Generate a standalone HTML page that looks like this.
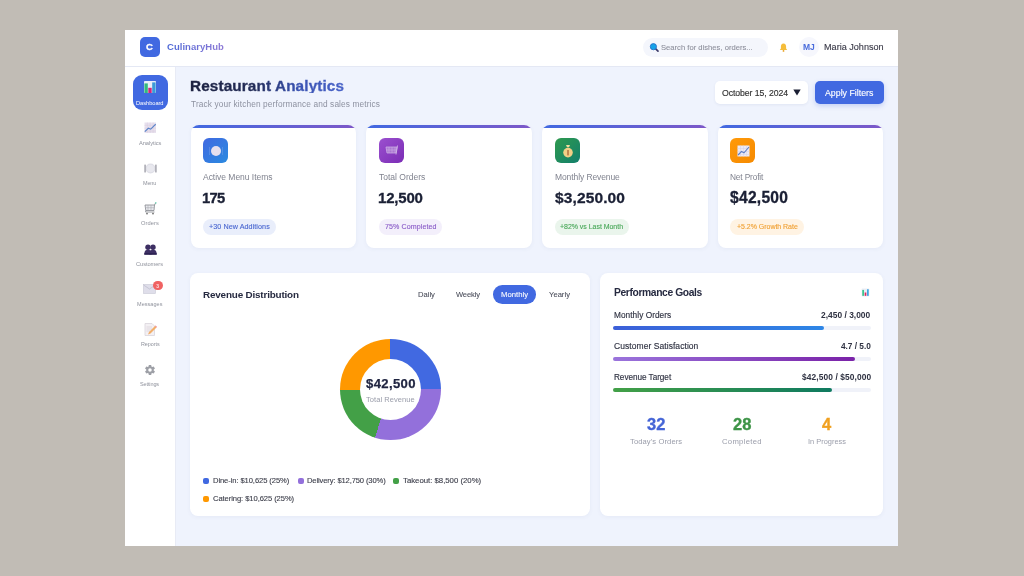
<!DOCTYPE html>
<html><head><meta charset="utf-8">
<style>
*{margin:0;padding:0;box-sizing:border-box}
html,body{width:1024px;height:576px;overflow:hidden;background:#c1bcb5;font-family:"Liberation Sans",sans-serif}
.a{position:absolute}
.t{position:absolute;white-space:pre;font-family:"Liberation Sans",sans-serif;will-change:transform}
.card{position:absolute;background:#fff;border-radius:8px;box-shadow:0 1px 4px rgba(60,80,140,.06);overflow:hidden}
.bar{position:absolute;left:0;top:0;right:0;height:3px;background:linear-gradient(90deg,#4169e1,#7d58c8)}
.ib{position:absolute;width:25px;height:25px;border-radius:6px}
.badge{position:absolute;height:16px;border-radius:8px}
.track{position:absolute;left:613px;width:257.6px;height:4px;border-radius:2px;background:#f0f2f9}
.fill{position:absolute;left:0;top:0;height:4px;border-radius:2px}
.dot{position:absolute;width:6px;height:6px;border-radius:2px}
</style></head><body>
<div style="position:absolute;left:0;top:0;width:1024px;height:576px;background:#c1bcb5;filter:blur(0.35px)">
<!-- app frame -->
<div class="a" style="left:125px;top:30px;width:773px;height:516px;background:#eff3fd"></div>
<!-- header -->
<div class="a" style="left:125px;top:30px;width:773px;height:36.5px;background:#fff;border-bottom:1px solid #e4e8f4"></div>
<div class="a" style="left:140px;top:37px;width:20px;height:20px;border-radius:5px;background:#4169e1"></div>
<div class="a" style="left:643px;top:37.5px;width:125px;height:19.5px;border-radius:10px;background:#f4f6fc"></div>
<!-- search icon -->
<svg class="a" style="left:649.3px;top:41.7px" width="11" height="11" viewBox="0 0 11 11">
 <line x1="6.2" y1="6.4" x2="9" y2="9.2" stroke="#3e3d6a" stroke-width="1.7" stroke-linecap="round"/>
 <circle cx="4.4" cy="4.7" r="3.1" fill="#15a3e8" stroke="#2a70c8" stroke-width="0.9"/>
</svg>
<!-- bell -->
<svg class="a" style="left:779px;top:43px" width="9" height="9" viewBox="0 0 9 9">
 <path d="M4.5 0.6 C2.6 0.6 1.9 2.2 1.9 3.8 L1.9 5.6 L0.8 7.1 L8.2 7.1 L7.1 5.6 L7.1 3.8 C7.1 2.2 6.4 0.6 4.5 0.6Z" fill="#f5bd3a"/>
 <circle cx="4.5" cy="7.9" r="0.9" fill="#e8a020"/>
</svg>
<div class="a" style="left:799px;top:37px;width:20px;height:20px;border-radius:50%;background:#f6f7fd"></div>
<!-- sidebar -->
<div class="a" style="left:125px;top:66.5px;width:51px;height:479.5px;background:#fff;border-right:1px solid #e8ebf5"></div>
<div class="a" style="left:132.5px;top:75px;width:35.5px;height:35px;border-radius:9px;background:#4169e1"></div>
<!-- sidebar icons -->
<svg class="a" style="left:144px;top:81px" width="12" height="12" viewBox="0 0 12 12">
 <rect x="0" y="0" width="12" height="12" rx="0.8" fill="#e9edf7"/>
 <rect x="0.4" y="2.4" width="3.4" height="9.6" fill="#34b87e"/>
 <rect x="4.3" y="6.8" width="3.4" height="5.2" fill="#d6247a"/>
 <rect x="8.2" y="1.4" width="3.4" height="10.6" fill="#3a9ad8"/>
</svg>
<svg class="a" style="left:143.8px;top:121.5px" width="12.5" height="11.5" viewBox="0 0 13 12" opacity="0.85">
 <rect x="0.5" y="0.5" width="12" height="11" fill="#e4dcec"/>
 <path d="M0.5 3.5H12.5M0.5 6.5H12.5M0.5 9.5H12.5M3.5 0.5V11.5M6.5 0.5V11.5M9.5 0.5V11.5" stroke="#d2c4d8" stroke-width="0.5"/>
 <path d="M0.8 10 L4.5 6.5 L7 7.5 L12.2 2.2" stroke="#3f6fc0" stroke-width="1.2" fill="none"/>
</svg>
<svg class="a" style="left:143.5px;top:162.8px" width="13" height="11" viewBox="0 0 13 11" opacity="0.85">
 <circle cx="6.5" cy="5.5" r="5" fill="#d9d9e2"/>
 <circle cx="6.5" cy="5.5" r="3.8" fill="#e4e4ec"/>
 <rect x="0.3" y="1.5" width="1.6" height="8" rx="0.6" fill="#9c9ca6"/>
 <rect x="11.1" y="1.5" width="1.6" height="8" rx="0.6" fill="#9c9ca6"/>
</svg>
<svg class="a" style="left:143.5px;top:201.5px" width="13" height="13" viewBox="0 0 13 13" opacity="0.85">
 <path d="M1 3 H10.5 L10 8.5 H1.8Z" fill="#e6e7ec" stroke="#6f717a" stroke-width="0.8"/>
 <path d="M4 3V8.5M7 3V8.5M1.3 5.7H10.3" stroke="#9c9ea6" stroke-width="0.6"/>
 <path d="M10.5 3 L11.6 1" stroke="#6f717a" stroke-width="0.9"/>
 <path d="M1.8 8.5 L1.6 10 H10.5" stroke="#6f717a" stroke-width="0.8" fill="none"/>
 <circle cx="3" cy="11.6" r="0.9" fill="#555"/><circle cx="9" cy="11.6" r="0.9" fill="#555"/>
 <circle cx="11.8" cy="0.9" r="0.8" fill="#5ac8a8"/>
</svg>
<svg class="a" style="left:143.5px;top:244px" width="13" height="11" viewBox="0 0 13 11">
 <circle cx="4" cy="3.2" r="2.7" fill="#3d2f63"/><circle cx="9" cy="3.2" r="2.7" fill="#3d2f63"/>
 <path d="M0.3 10.5 C0.3 6.5 2 5.8 4 5.8 C6 5.8 7.7 6.5 7.7 10.5Z" fill="#3d2f63"/>
 <path d="M5.3 10.5 C5.3 6.5 7 5.8 9 5.8 C11 5.8 12.7 6.5 12.7 10.5Z" fill="#3d2f63"/>
 <rect x="0.3" y="9.2" width="12.4" height="1.5" fill="#2a2050"/>
</svg>
<svg class="a" style="left:143.3px;top:284px" width="13" height="10" viewBox="0 0 13 10" opacity="0.9">
 <rect x="0.4" y="0.4" width="12.2" height="9.2" fill="#dcdbe8" stroke="#c4c3d2" stroke-width="0.6"/>
 <path d="M0.6 1 L6.5 5 L12.4 1" stroke="#b5b4c6" stroke-width="0.7" fill="none"/>
</svg>
<div class="a" style="left:153.4px;top:281px;width:9.3px;height:9.3px;border-radius:50%;background:#f06262"></div>
<div class="t" style="left:153.4px;top:282.5px;width:9.3px;text-align:center;font-size:5px;line-height:6px;color:rgba(255,255,255,.8);font-weight:700">3</div>
<svg class="a" style="left:144px;top:323px" width="13" height="13" viewBox="0 0 13 13" opacity="0.85">
 <path d="M1 0.5 H8 L10.5 3 V12.5 H1Z" fill="#f2eef2" stroke="#d0c8d2" stroke-width="0.7"/>
 <path d="M2.5 4H8M2.5 6H8M2.5 8H6" stroke="#c9bfcb" stroke-width="0.6"/>
 <path d="M4 11.5 L5 9 L11 3 L12.5 4.5 L6.5 10.5Z" fill="#f0a050"/>
 <path d="M11 3 L12.5 4.5 L13 4 L11.5 2.5Z" fill="#e8506a"/>
</svg>
<svg class="a" style="left:144px;top:363.5px" width="12" height="12" viewBox="0 0 24 24" opacity="0.85">
 <path fill="#8d8f97" d="M12 15.5A3.5 3.5 0 1 1 12 8.5a3.5 3.5 0 0 1 0 7zm7.43-2.53c.04-.32.07-.64.07-.97s-.03-.66-.07-1l2.11-1.63c.19-.15.24-.42.12-.64l-2-3.46c-.12-.22-.39-.31-.61-.22l-2.49 1c-.52-.39-1.06-.73-1.69-.98l-.37-2.65A.506.506 0 0 0 14 2h-4c-.25 0-.46.18-.5.42l-.37 2.65c-.63.25-1.17.59-1.69.98l-2.49-1c-.22-.09-.49 0-.61.22l-2 3.46c-.13.22-.07.49.12.64L4.57 11c-.04.34-.07.67-.07 1s.03.65.07.97l-2.11 1.66c-.19.15-.25.42-.12.64l2 3.46c.12.22.39.3.61.22l2.49-1.01c.52.4 1.06.74 1.69.99l.37 2.65c.04.24.25.42.5.42h4c.25 0 .46-.18.5-.42l.37-2.65c.63-.26 1.17-.59 1.69-.99l2.49 1.01c.22.08.49 0 .61-.22l2-3.46c.12-.22.07-.49-.12-.64l-2.11-1.66z"/>
</svg>
<!-- date & button -->
<div class="a" style="left:714.5px;top:81px;width:93px;height:22.5px;border-radius:5px;background:#fff;box-shadow:0 1px 3px rgba(40,60,120,.07)"></div>
<svg class="a" style="left:792.5px;top:89.3px" width="8" height="7" viewBox="0 0 8 7"><path d="M0.3 0.5 H7.7 L4 6.6Z" fill="#1b1f33"/></svg>
<div class="a" style="left:815px;top:81px;width:69px;height:22.5px;border-radius:5px;background:#4169e1;box-shadow:0 2px 5px rgba(65,105,225,.25)"></div>
<!-- stat cards -->
<div class="card" style="left:190.5px;top:125px;width:165.5px;height:123px"><div class="bar"></div></div>
<div class="card" style="left:366.3px;top:125px;width:165.5px;height:123px"><div class="bar"></div></div>
<div class="card" style="left:542.1px;top:125px;width:165.5px;height:123px"><div class="bar"></div></div>
<div class="card" style="left:717.8px;top:125px;width:165.5px;height:123px"><div class="bar"></div></div>
<div class="ib" style="left:203px;top:138px;background:linear-gradient(135deg,#4169e1,#2a8ae0)"></div>
<div class="a" style="left:210.5px;top:145.8px;width:10px;height:10px;border-radius:50%;background:#e6dfee"></div>
<div class="a" style="left:208.6px;top:146.5px;width:1px;height:8px;background:rgba(220,220,240,.18)"></div>
<div class="a" style="left:221.6px;top:146.5px;width:1px;height:8px;background:rgba(220,220,240,.18)"></div>
<div class="ib" style="left:378.8px;top:138px;background:linear-gradient(135deg,#9b50cf,#7b2cb5)"></div>
<svg class="a" style="left:384.5px;top:145px" width="14" height="11" viewBox="0 0 14 11" opacity="0.75">
 <path d="M1 2 H12 L11 8 H2Z" fill="#b58ad8" stroke="#e0d0f0" stroke-width="0.8"/>
 <path d="M4 2V8M7 2V8M10 2V8M1.5 5H11.5" stroke="#e0d0f0" stroke-width="0.6"/>
 <path d="M12.5 0.5 L11 9.5" stroke="#e8def2" stroke-width="0.9"/>
</svg>
<div class="ib" style="left:554.7px;top:138px;background:linear-gradient(135deg,#2f9a4e,#137f6c)"></div>
<svg class="a" style="left:561.5px;top:143.5px" width="12" height="14" viewBox="0 0 12 14">
 <path d="M4 1 L8 1 L7 3.2 L5 3.2Z" fill="#f3dc9a"/>
 <circle cx="6" cy="8.6" r="4.8" fill="#f2cf86"/>
 <rect x="5.3" y="6" width="1.4" height="5.4" fill="#b06a3a"/>
</svg>
<div class="ib" style="left:730.4px;top:138px;background:linear-gradient(135deg,#ff9a0a,#f68a00)"></div>
<svg class="a" style="left:736.5px;top:144.5px" width="13" height="12" viewBox="0 0 13 12">
 <rect x="0.5" y="0.5" width="12" height="11" fill="#eceaf5"/>
 <path d="M0.5 3.5H12.5M0.5 6.5H12.5M0.5 9.5H12.5M3.5 0.5V11.5M6.5 0.5V11.5M9.5 0.5V11.5" stroke="#d6d2e6" stroke-width="0.5"/>
 <path d="M1 10 L4.5 6.5 L7 7.8 L12 2" stroke="#5d7fc8" stroke-width="1.1" fill="none"/>
</svg>
<div class="badge" style="left:203.1px;top:219px;width:73px;background:#e9eefb"></div>
<div class="badge" style="left:378.9px;top:219px;width:62.8px;background:#f3effb"></div>
<div class="badge" style="left:554.7px;top:219px;width:74.4px;background:#eaf5ec"></div>
<div class="badge" style="left:730.4px;top:219px;width:73.3px;background:#fff3e3"></div>
<!-- revenue card -->
<div class="card" style="left:190.3px;top:272.6px;width:399.8px;height:243px"></div>
<div class="a" style="left:492.9px;top:285.3px;width:43.1px;height:18.5px;border-radius:9.25px;background:#4169e1"></div>
<div class="a" style="left:339.8px;top:339.2px;width:100.8px;height:100.8px;border-radius:50%;background:conic-gradient(#4169e1 0 25%,#9370db 25% 55%,#43a047 55% 75%,#ff9800 75% 100%)"></div>
<div class="a" style="left:359.7px;top:359.1px;width:61px;height:61px;border-radius:50%;background:#fff"></div>
<div class="dot" style="left:202.9px;top:477.6px;background:#4169e1"></div>
<div class="dot" style="left:297.5px;top:477.6px;background:#9370db"></div>
<div class="dot" style="left:393.4px;top:477.6px;background:#43a047"></div>
<div class="dot" style="left:202.9px;top:496px;background:#ff9800"></div>
<!-- performance card -->
<div class="card" style="left:600.3px;top:272.6px;width:282.7px;height:243px"></div>
<svg class="a" style="left:861px;top:288px" width="9" height="9" viewBox="0 0 14 14">
 <rect x="1" y="0.8" width="12" height="12.4" rx="1" fill="#e9edf5"/>
 <rect x="2" y="3" width="2.6" height="9.2" fill="#35c28a"/>
 <rect x="5.7" y="7" width="2.6" height="5.2" fill="#e0245e"/>
 <rect x="9.4" y="2" width="2.6" height="10.2" fill="#3aa0e0"/>
</svg>
<div class="track" style="top:326px"><div class="fill" style="width:211.2px;background:linear-gradient(90deg,#3c5fd8,#2d86e6)"></div></div>
<div class="track" style="top:356.8px"><div class="fill" style="width:242.4px;background:linear-gradient(90deg,#9a74dc,#7a22a8)"></div></div>
<div class="track" style="top:387.5px"><div class="fill" style="width:219.1px;background:linear-gradient(90deg,#43a047,#0f7a60)"></div></div>
<div class="t" style="left:146.30px;top:42px;font-size:9.5px;line-height:9.5px;font-weight:700;color:#fff;letter-spacing:0.000px;-webkit-text-stroke:0.3px #fff;">C</div>
<div class="t" style="left:166.50px;top:42px;font-size:9.5px;line-height:9.5px;font-weight:700;color:#4f6bd8;letter-spacing:0.040px;background:linear-gradient(90deg,#4a66d6,#8e7ad6);-webkit-background-clip:text;background-clip:text;color:transparent;">CulinaryHub</div>
<div class="t" style="left:660.50px;top:44px;font-size:7.6px;line-height:7.6px;font-weight:400;color:#8c8e9a;letter-spacing:0.019px;-webkit-text-stroke:0.08px #8c8e9a;">Search for dishes, orders...</div>
<div class="t" style="left:803.00px;top:43px;font-size:8.5px;line-height:8.5px;font-weight:700;color:#4a6cdc;letter-spacing:0.000px;">MJ</div>
<div class="t" style="left:824.00px;top:43px;font-size:9.1px;line-height:9.1px;font-weight:400;color:#3a3a48;letter-spacing:0.000px;-webkit-text-stroke:0.12px #3a3a48;">Maria Johnson</div>
<div class="t" style="left:136.15px;top:101px;font-size:5.7px;line-height:5.7px;font-weight:400;color:#fff;letter-spacing:-0.038px;">Dashboard</div>
<div class="t" style="left:138.75px;top:141px;font-size:5.7px;line-height:5.7px;font-weight:400;color:#8f929c;letter-spacing:-0.062px;">Analytics</div>
<div class="t" style="left:143.25px;top:181px;font-size:5.5px;line-height:5.5px;font-weight:400;color:#8f929c;letter-spacing:-0.167px;">Menu</div>
<div class="t" style="left:141.30px;top:221px;font-size:5.7px;line-height:5.7px;font-weight:400;color:#8f929c;letter-spacing:0.080px;">Orders</div>
<div class="t" style="left:136.25px;top:262px;font-size:5.7px;line-height:5.7px;font-weight:400;color:#8f929c;letter-spacing:-0.062px;">Customers</div>
<div class="t" style="left:137.30px;top:302px;font-size:5.5px;line-height:5.5px;font-weight:400;color:#8f929c;letter-spacing:0.057px;">Messages</div>
<div class="t" style="left:140.60px;top:342px;font-size:5.4px;line-height:5.4px;font-weight:400;color:#8f929c;letter-spacing:-0.033px;">Reports</div>
<div class="t" style="left:140.40px;top:382px;font-size:5.5px;line-height:5.5px;font-weight:400;color:#8f929c;letter-spacing:-0.114px;">Settings</div>
<div class="t" style="left:189.60px;top:78px;font-size:15.3px;line-height:15.3px;font-weight:700;color:#1f2544;letter-spacing:0.126px;background:linear-gradient(90deg,#1c2140 0%,#232c58 42%,#3a53b2 70%,#4862c8 100%);-webkit-background-clip:text;background-clip:text;color:transparent;-webkit-text-stroke:0.35px transparent;">Restaurant Analytics</div>
<div class="t" style="left:190.60px;top:100px;font-size:8.3px;line-height:8.3px;font-weight:400;color:#8d91a0;letter-spacing:0.123px;">Track your kitchen performance and sales metrics</div>
<div class="t" style="left:722.00px;top:89px;font-size:8.7px;line-height:8.7px;font-weight:400;color:#333;letter-spacing:-0.067px;-webkit-text-stroke:0.15px #333;">October 15, 2024</div>
<div class="t" style="left:825.00px;top:89px;font-size:8.8px;line-height:8.8px;font-weight:400;color:#fff;letter-spacing:0.000px;-webkit-text-stroke:0.12px #fff;">Apply Filters</div>
<div class="t" style="left:203.10px;top:173px;font-size:8.5px;line-height:8.5px;font-weight:400;color:#80838f;letter-spacing:-0.025px;">Active Menu Items</div>
<div class="t" style="left:202.10px;top:191px;font-size:14.8px;line-height:14.8px;font-weight:700;color:#1b2035;letter-spacing:-0.700px;-webkit-text-stroke:0.3px #1b2035;">175</div>
<div class="t" style="left:209.10px;top:223px;font-size:7.2px;line-height:7.2px;font-weight:400;color:#4a67d0;letter-spacing:0.062px;-webkit-text-stroke:0.12px #4a67d0;">+30 New Additions</div>
<div class="t" style="left:378.90px;top:173px;font-size:8.5px;line-height:8.5px;font-weight:400;color:#80838f;letter-spacing:0.000px;">Total Orders</div>
<div class="t" style="left:377.90px;top:190px;font-size:15.0px;line-height:15.0px;font-weight:700;color:#1b2035;letter-spacing:-0.200px;-webkit-text-stroke:0.3px #1b2035;">12,500</div>
<div class="t" style="left:384.80px;top:224px;font-size:7.1px;line-height:7.1px;font-weight:400;color:#8a5cc8;letter-spacing:0.083px;-webkit-text-stroke:0.12px #8a5cc8;">75% Completed</div>
<div class="t" style="left:554.70px;top:173px;font-size:8.5px;line-height:8.5px;font-weight:400;color:#80838f;letter-spacing:-0.093px;">Monthly Revenue</div>
<div class="t" style="left:554.70px;top:190px;font-size:15.5px;line-height:15.5px;font-weight:700;color:#1b2035;letter-spacing:0.125px;-webkit-text-stroke:0.3px #1b2035;">$3,250.00</div>
<div class="t" style="left:560.20px;top:223px;font-size:7.0px;line-height:7.0px;font-weight:400;color:#4aa85a;letter-spacing:-0.035px;-webkit-text-stroke:0.12px #4aa85a;">+82% vs Last Month</div>
<div class="t" style="left:730.40px;top:173px;font-size:8.3px;line-height:8.3px;font-weight:400;color:#80838f;letter-spacing:-0.133px;">Net Profit</div>
<div class="t" style="left:730.40px;top:190px;font-size:15.6px;line-height:15.6px;font-weight:700;color:#1b2035;letter-spacing:0.267px;-webkit-text-stroke:0.3px #1b2035;">$42,500</div>
<div class="t" style="left:736.80px;top:223px;font-size:7.0px;line-height:7.0px;font-weight:400;color:#f0a033;letter-spacing:-0.031px;-webkit-text-stroke:0.12px #f0a033;">+5.2% Growth Rate</div>
<div class="t" style="left:202.70px;top:290px;font-size:9.9px;line-height:9.9px;font-weight:700;color:#262a40;letter-spacing:-0.174px;">Revenue Distribution</div>
<div class="t" style="left:418.20px;top:291px;font-size:7.6px;line-height:7.6px;font-weight:400;color:#4a4d5a;letter-spacing:0.000px;-webkit-text-stroke:0.08px #4a4d5a;">Daily</div>
<div class="t" style="left:456.00px;top:291px;font-size:7.6px;line-height:7.6px;font-weight:400;color:#4a4d5a;letter-spacing:-0.160px;-webkit-text-stroke:0.08px #4a4d5a;">Weekly</div>
<div class="t" style="left:500.80px;top:291px;font-size:7.7px;line-height:7.7px;font-weight:400;color:#fff;letter-spacing:0.033px;-webkit-text-stroke:0.08px #fff;">Monthly</div>
<div class="t" style="left:548.80px;top:291px;font-size:7.6px;line-height:7.6px;font-weight:400;color:#4a4d5a;letter-spacing:0.020px;-webkit-text-stroke:0.08px #4a4d5a;">Yearly</div>
<div class="t" style="left:365.60px;top:377px;font-size:13.1px;line-height:13.1px;font-weight:700;color:#1f2440;letter-spacing:0.367px;-webkit-text-stroke:0.25px #1f2440;">$42,500</div>
<div class="t" style="left:365.80px;top:396px;font-size:7.5px;line-height:7.5px;font-weight:400;color:#9a9daa;letter-spacing:0.067px;">Total Revenue</div>
<div class="t" style="left:213.20px;top:477px;font-size:7.6px;line-height:7.6px;font-weight:400;color:#3c3e4a;letter-spacing:-0.090px;-webkit-text-stroke:0.12px #3c3e4a;">Dine-in: $10,625 (25%)</div>
<div class="t" style="left:307.20px;top:477px;font-size:7.6px;line-height:7.6px;font-weight:400;color:#3c3e4a;letter-spacing:-0.127px;-webkit-text-stroke:0.12px #3c3e4a;">Delivery: $12,750 (30%)</div>
<div class="t" style="left:403.00px;top:477px;font-size:7.8px;line-height:7.8px;font-weight:400;color:#3c3e4a;letter-spacing:-0.015px;-webkit-text-stroke:0.12px #3c3e4a;">Takeout: $8,500 (20%)</div>
<div class="t" style="left:213.20px;top:495px;font-size:7.6px;line-height:7.6px;font-weight:400;color:#3c3e4a;letter-spacing:-0.073px;-webkit-text-stroke:0.12px #3c3e4a;">Catering: $10,625 (25%)</div>
<div class="t" style="left:613.50px;top:288px;font-size:10.3px;line-height:10.3px;font-weight:700;color:#262a40;letter-spacing:-0.381px;">Performance Goals</div>
<div class="t" style="left:613.50px;top:311px;font-size:8.3px;line-height:8.3px;font-weight:400;color:#2f3242;letter-spacing:0.038px;-webkit-text-stroke:0.15px #2f3242;">Monthly Orders</div>
<div class="t" style="left:821.30px;top:311px;font-size:8.4px;line-height:8.4px;font-weight:700;color:#2f3242;letter-spacing:0.025px;">2,450 / 3,000</div>
<div class="t" style="left:613.50px;top:342px;font-size:8.5px;line-height:8.5px;font-weight:400;color:#2f3242;letter-spacing:0.060px;-webkit-text-stroke:0.15px #2f3242;">Customer Satisfaction</div>
<div class="t" style="left:840.80px;top:342px;font-size:8.3px;line-height:8.3px;font-weight:700;color:#2f3242;letter-spacing:-0.025px;">4.7 / 5.0</div>
<div class="t" style="left:613.50px;top:374px;font-size:8.2px;line-height:8.2px;font-weight:400;color:#2f3242;letter-spacing:-0.038px;-webkit-text-stroke:0.15px #2f3242;">Revenue Target</div>
<div class="t" style="left:801.90px;top:373px;font-size:8.4px;line-height:8.4px;font-weight:700;color:#2f3242;letter-spacing:0.106px;">$42,500 / $50,000</div>
<div class="t" style="left:647.30px;top:416px;font-size:16.5px;line-height:16.5px;font-weight:700;color:#4464d6;letter-spacing:0.000px;-webkit-text-stroke:0.35px #4464d6;">32</div>
<div class="t" style="left:630.15px;top:438px;font-size:7.6px;line-height:7.6px;font-weight:400;color:#9a9daa;letter-spacing:0.100px;">Today's Orders</div>
<div class="t" style="left:732.60px;top:416px;font-size:16.5px;line-height:16.5px;font-weight:700;color:#3d9447;letter-spacing:0.000px;-webkit-text-stroke:0.35px #3d9447;">28</div>
<div class="t" style="left:721.95px;top:438px;font-size:7.7px;line-height:7.7px;font-weight:400;color:#9a9daa;letter-spacing:0.287px;">Completed</div>
<div class="t" style="left:822.40px;top:416px;font-size:16.5px;line-height:16.5px;font-weight:700;color:#f0a020;letter-spacing:0.000px;-webkit-text-stroke:0.35px #f0a020;">4</div>
<div class="t" style="left:808.30px;top:438px;font-size:7.4px;line-height:7.4px;font-weight:400;color:#9a9daa;letter-spacing:0.020px;">In Progress</div>
</div>
</body></html>
